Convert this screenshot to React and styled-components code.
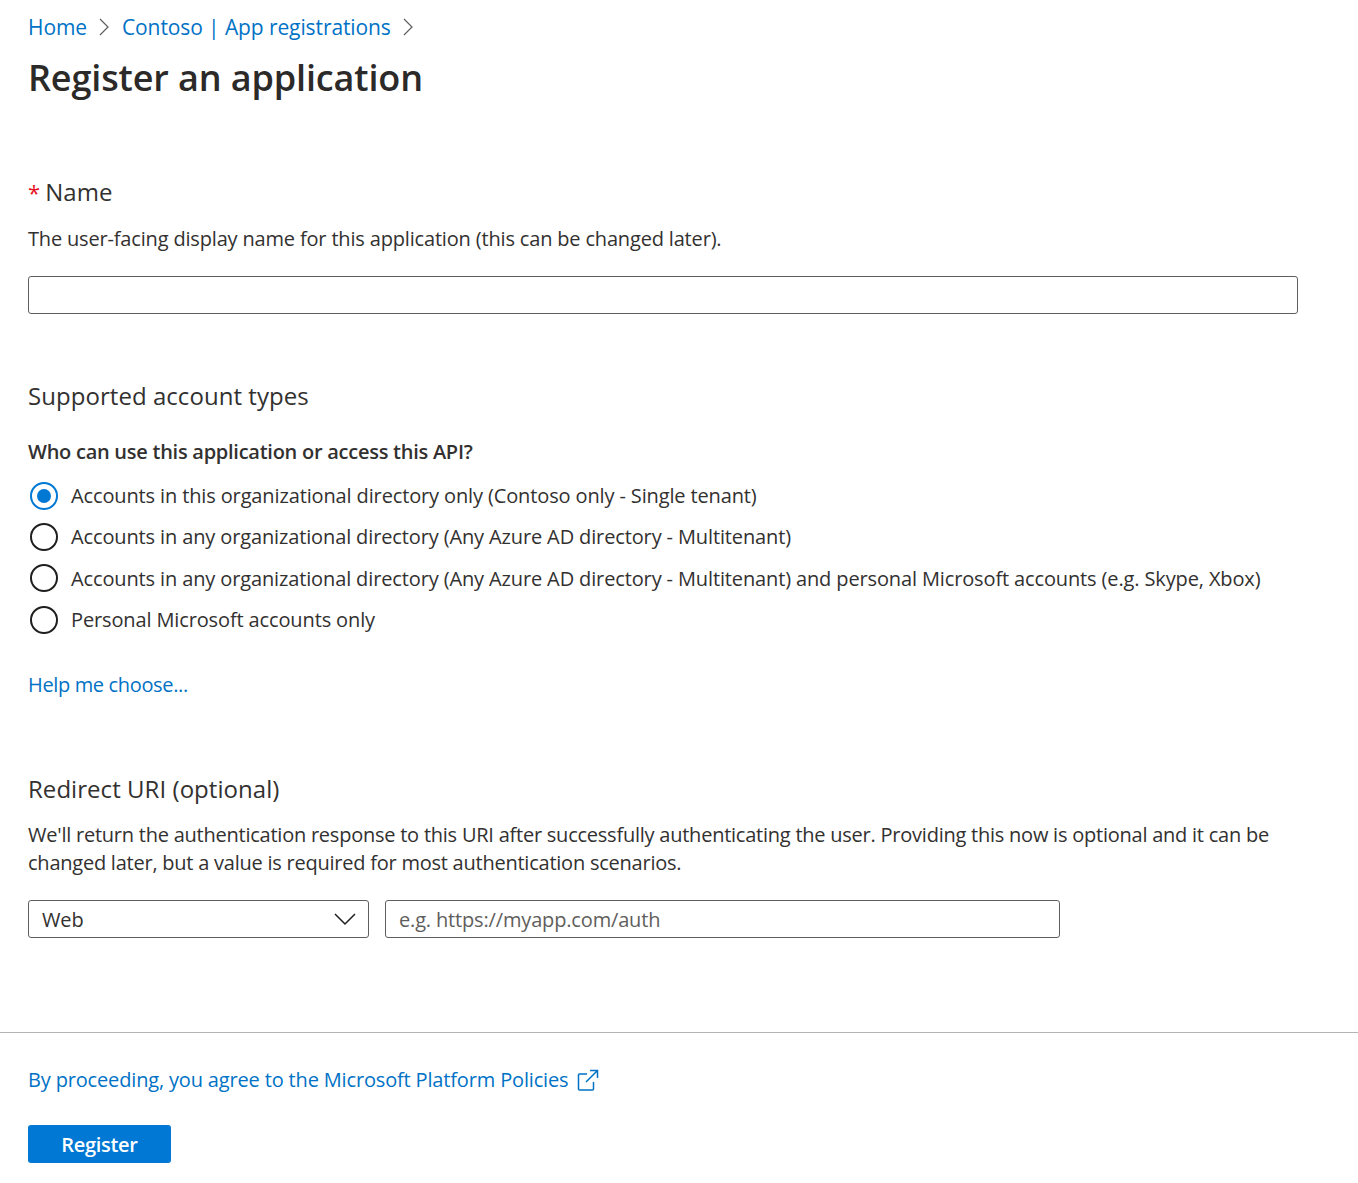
import React from "react";
import styled, { createGlobalStyle } from "styled-components";

const GlobalStyle = createGlobalStyle`
  html, body {
    margin: 0;
    padding: 0;
    background: #fff;
  }
  body {
    font-family: "Open Sans", "Noto Sans", "Liberation Sans", sans-serif;
    color: #323130;
  }
`;

const Page = styled.div`
  width: 1358px;
  height: 1183px;
  display: flex;
  flex-direction: column;
  overflow: hidden;
`;

const Main = styled.div`
  padding: 0 28px;
  height: 1032px;
  box-sizing: border-box;
`;

const Crumbs = styled.nav`
  display: flex;
  align-items: center;
  height: 28px;
  margin-top: 13px;
  gap: 12.5px;
`;

const BlueLink = styled.a`
  color: #0072c6;
  font-size: ${(p) => p.$size || 20}px;
  letter-spacing: ${(p) => p.$spacing ?? -0.16}px;
  line-height: 28px;
  text-decoration: none;
  white-space: nowrap;
`;

const Title = styled.h1`
  margin: 12px 0 0;
  font-size: 36px;
  line-height: 50px;
  font-weight: 600;
  letter-spacing: -0.13px;
  color: #2b2a29;
`;

const SectionTitle = styled.h2`
  margin: ${(p) => p.$top}px 0 0;
  font-size: 24px;
  line-height: 32px;
  font-weight: 400;
  letter-spacing: 0.05px;
  color: #323130;
`;

const Required = styled.span`
  color: #e81123;
  margin-right: 5px;
  font-size: 22px;
`;

const BodyText = styled.p`
  margin: ${(p) => p.$top}px 0 0;
  font-size: 20px;
  line-height: 28px;
  letter-spacing: ${(p) => p.$spacing ?? -0.17}px;
  color: #323130;
  font-weight: ${(p) => (p.$strong ? 600 : 400)};
`;

const TextField = styled.div`
  box-sizing: border-box;
  height: 38px;
  width: ${(p) => p.$width}px;
  border: 1.5px solid #605e5c;
  border-radius: 3px;
  background: #fff;
  display: flex;
  align-items: center;
  padding: 0 12px 0 13px;
  font-size: 20px;
  letter-spacing: -0.16px;
  color: ${(p) => p.$color || "#323130"};
  justify-content: ${(p) => (p.$spread ? "space-between" : "flex-start")};
`;

const NameField = styled(TextField)`
  margin-top: 23px;
`;

const RadioList = styled.div`
  margin-top: 9px;
  display: flex;
  flex-direction: column;
`;

const RadioRow = styled.label`
  display: flex;
  align-items: center;
  height: 41.33px;
  gap: 13px;
  padding-left: 2px;
  font-size: 20px;
  letter-spacing: -0.13px;
  white-space: nowrap;
`;

const RadioCircle = styled.span`
  box-sizing: border-box;
  width: 28px;
  height: 28px;
  border-radius: 50%;
  border: 2px solid ${(p) => (p.$on ? "#0078d4" : "#201f1e")};
  display: flex;
  align-items: center;
  justify-content: center;
  flex: none;
`;

const RadioDot = styled.span`
  width: 14px;
  height: 14px;
  border-radius: 50%;
  background: #0078d4;
`;

const HelpLine = styled.div`
  margin-top: 31px;
`;

const UriRow = styled.div`
  display: flex;
  gap: 16px;
  margin-top: 23px;
`;

const Footer = styled.footer`
  border-top: 1.5px solid #b5b4b3;
  padding: 33px 28px 0;
`;

const PolicyLine = styled.div`
  display: flex;
  align-items: center;
  gap: 9px;
`;

const RegisterButton = styled.button`
  display: block;
  margin-top: 31px;
  width: 143px;
  height: 38px;
  border: none;
  border-radius: 3px;
  background: #0078d4;
  color: #fff;
  font-family: inherit;
  font-size: 20px;
  font-weight: 600;
  letter-spacing: -0.3px;
  padding: 0;
`;

const Chevron = () => (
  <svg width="10" height="18" viewBox="0 0 10 18" fill="none" stroke="#605e5c" strokeWidth="1.2">
    <path d="M1 1l8 8-8 8" />
  </svg>
);

const accountTypes = [
  "Accounts in this organizational directory only (Contoso only - Single tenant)",
  "Accounts in any organizational directory (Any Azure AD directory - Multitenant)",
  "Accounts in any organizational directory (Any Azure AD directory - Multitenant) and personal Microsoft accounts (e.g. Skype, Xbox)",
  "Personal Microsoft accounts only",
];

export default function App() {
  return (
    <Page>
      <GlobalStyle />
      <Main>
        <Crumbs>
          <BlueLink href="#" $size={21} $spacing={-0.1}>Home</BlueLink>
          <Chevron />
          <BlueLink href="#" $size={21} $spacing={-0.1}>Contoso | App registrations</BlueLink>
          <Chevron />
        </Crumbs>
        <Title>Register an application</Title>

        <SectionTitle $top={73}>
          <Required>*</Required>Name
        </SectionTitle>
        <BodyText $top={17}>
          The user-facing display name for this application (this can be changed later).
        </BodyText>
        <NameField $width={1270} />

        <SectionTitle $top={66}>Supported account types</SectionTitle>
        <BodyText $top={26} $strong $spacing={-0.26}>
          Who can use this application or access this API?
        </BodyText>
        <RadioList>
          {accountTypes.map((text, i) => (
            <RadioRow key={text}>
              <RadioCircle $on={i === 0}>{i === 0 && <RadioDot />}</RadioCircle>
              {text}
            </RadioRow>
          ))}
        </RadioList>
        <HelpLine>
          <BlueLink href="#" $spacing={-0.35}>Help me choose...</BlueLink>
        </HelpLine>

        <SectionTitle $top={74}>Redirect URI (optional)</SectionTitle>
        <BodyText $top={16} $spacing={-0.235}>
          We'll return the authentication response to this URI after successfully authenticating the user. Providing this now is optional and it can be changed later, but a value is required for most authentication scenarios.
        </BodyText>
        <UriRow>
          <TextField $width={341} $spread>
            Web
            <svg width="22" height="13" viewBox="0 0 22 13" fill="none" stroke="#201f1e" strokeWidth="1.5">
              <path d="M1 1l10 10L21 1" />
            </svg>
          </TextField>
          <TextField $width={675} $color="#605e5c">e.g. https://myapp.com/auth</TextField>
        </UriRow>
      </Main>
      <Footer>
        <PolicyLine>
          <BlueLink href="#">By proceeding, you agree to the Microsoft Platform Policies</BlueLink>
          <svg width="22" height="22" viewBox="0 0 22 22" fill="none" stroke="#0072c6" strokeWidth="1.5">
            <path d="M10 5H2.5a1 1 0 0 0-1 1v14a1 1 0 0 0 1 1h13a1 1 0 0 0 1-1v-7" />
            <path d="M9 13L20.5 1.5M13 1.5h7.5V9" />
          </svg>
        </PolicyLine>
        <RegisterButton>Register</RegisterButton>
      </Footer>
    </Page>
  );
}
